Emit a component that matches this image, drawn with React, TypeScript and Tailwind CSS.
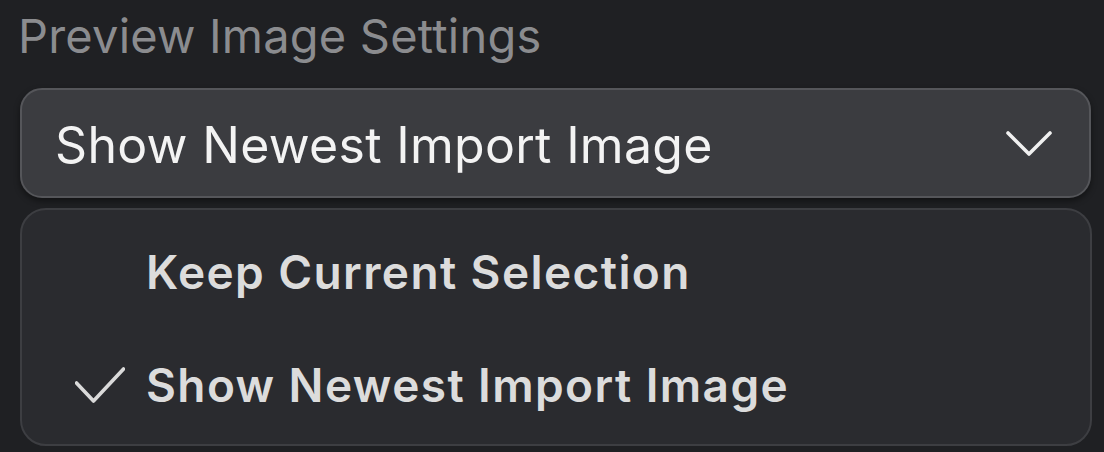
import React from "react";

export default function App() {
  const font = { fontFamily: "Inter, 'Noto Sans', sans-serif" };
  return (
    <div
      className="w-[1104px] h-[452px] bg-[#1f2023] overflow-hidden flex flex-col"
      style={font}
    >
      <div className="pl-[18px] pt-[12px] text-[47px] leading-none tracking-[0.2px] text-[#8b8c8f]">
        Preview Image Settings
      </div>
      <div className="ml-[20px] mt-[29px] w-[1071px] h-[110px] rounded-[22px] border-2 border-[#55565a] bg-[#3b3c40] shadow-[0_3px_6px_rgba(0,0,0,0.45)] flex items-center justify-between pl-[33px] pr-[37px]">
        <span className="text-[50px] leading-none tracking-[0.3px] text-[#f3f3f3] pt-[4px]">
          Show Newest Import Image
        </span>
        <svg width="46" height="28" viewBox="0 0 46 28" fill="none">
          <polyline
            points="2,4 23,25 44,4"
            stroke="#f0f0f0"
            strokeWidth="3.6"
            strokeLinecap="round"
            strokeLinejoin="round"
          />
        </svg>
      </div>
      <div className="ml-[20px] mt-[10px] w-[1072px] h-[238px] rounded-[26px] border-2 border-[#3d3e42] bg-[#2a2b2f] flex flex-col pt-[5px]">
        <div className="h-[113px] flex items-center pl-[53px]">
          <div className="w-[50px] h-[36px]" />
          <span className="ml-[21px] text-[46px] leading-none font-semibold tracking-[1.4px] text-[#dcdcdc]">
            Keep Current Selection
          </span>
        </div>
        <div className="h-[113px] flex items-center pl-[53px]">
          <svg width="50" height="36" viewBox="0 0 50 36" fill="none">
            <polyline
              points="1.5,16 18.5,34 48.5,2"
              stroke="#dadada"
              strokeWidth="3.6"
              strokeLinecap="round"
              strokeLinejoin="round"
            />
          </svg>
          <span className="ml-[21px] text-[46px] leading-none font-semibold tracking-[1.4px] text-[#dcdcdc]">
            Show Newest Import Image
          </span>
        </div>
      </div>
    </div>
  );
}
